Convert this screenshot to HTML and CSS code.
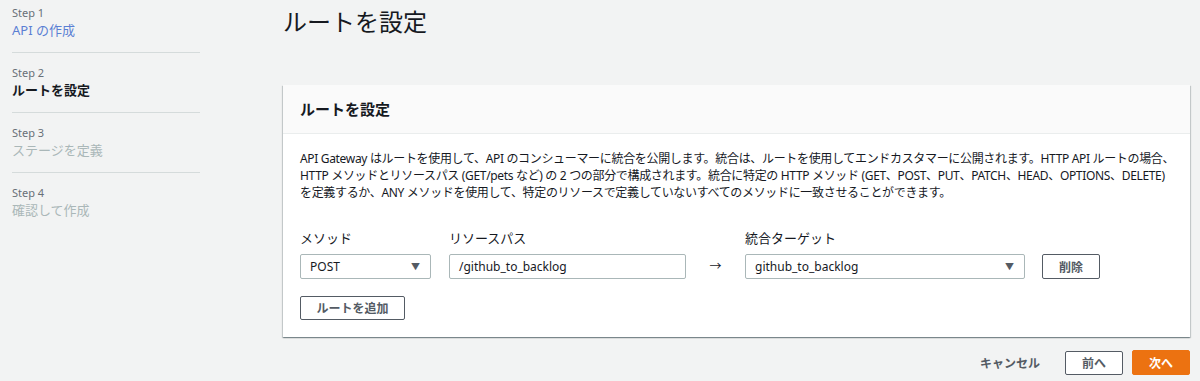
FILE: index.html
```html
<!DOCTYPE html>
<html lang="ja">
<head>
<meta charset="utf-8">
<link rel="stylesheet" href="styles.css">
</head>
<body>
<div class="page">
  <nav class="steps">
    <div class="step first">
      <div class="step-num">Step 1</div>
      <div class="step-title link">API の作成</div>
    </div>
    <div class="step">
      <div class="step-num">Step 2</div>
      <div class="step-title current">ルートを設定</div>
    </div>
    <div class="step">
      <div class="step-num">Step 3</div>
      <div class="step-title disabled">ステージを定義</div>
    </div>
    <div class="step last">
      <div class="step-num">Step 4</div>
      <div class="step-title disabled">確認して作成</div>
    </div>
  </nav>
  <main class="main">
    <h1 class="title">ルートを設定</h1>
    <section class="card">
      <header class="card-header">ルートを設定</header>
      <div class="card-body">
        <p class="desc">API Gateway はルートを使用して、API のコンシューマーに統合を公開します。統合は、ルートを使用してエンドカスタマーに公開されます。HTTP API ルートの場合、<br>HTTP メソッドとリソースパス (GET/pets など) の 2 つの部分で構成されます。統合に特定の HTTP メソッド (GET、POST、PUT、PATCH、HEAD、OPTIONS、DELETE)<br>を定義するか、ANY メソッドを使用して、特定のリソースで定義していないすべてのメソッドに一致させることができます。</p>
        <div class="route-row">
          <div class="field f-method">
            <label class="label">メソッド</label>
            <div class="select"><span>POST</span><span class="caret">▼</span></div>
          </div>
          <div class="field f-path">
            <label class="label">リソースパス</label>
            <div class="input">/github_to_backlog</div>
          </div>
          <div class="arrow">→</div>
          <div class="field f-target">
            <label class="label">統合ターゲット</label>
            <div class="select"><span>github_to_backlog</span><span class="caret">▼</span></div>
          </div>
          <button class="btn btn-del">削除</button>
        </div>
        <button class="btn btn-add">ルートを追加</button>
      </div>
    </section>
    <div class="footer">
      <span class="cancel">キャンセル</span>
      <button class="btn btn-prev">前へ</button>
      <button class="btn btn-next">次へ</button>
    </div>
  </main>
</div>
</body>
</html>
```
FILE: styles.css
```css
* { box-sizing: border-box; }
html, body {
  margin: 0;
  padding: 0;
  background: #f2f3f3;
  font-family: "Noto Sans", "Noto Sans CJK JP", sans-serif;
  color: #16191f;
}
.page {
  display: flex;
  width: 1200px;
  height: 381px;
  overflow: hidden;
}
.steps {
  width: 283px;
  flex: none;
  padding-left: 12px;
}
.step {
  width: 188px;
  padding: 12px 0 13px;
  border-bottom: 1px solid #d5dbdb;
}
.step.first { padding-top: 5px; }
.step.last { border-bottom: none; }
.step-num {
  font-size: 11px;
  line-height: 16px;
  color: #687078;
}
.step-title {
  font-size: 13px;
  line-height: 18px;
}
.step-title.link { color: #5b7fd3; }
.step-title.current { font-weight: 700; color: #16191f; }
.step-title.disabled { color: #aab7b8; }

.main {
  width: 907px;
  flex: none;
}
.title {
  margin: 7px 0 0;
  font-size: 24px;
  line-height: 30px;
  font-weight: 400;
  color: #16191f;
}
.card {
  margin-top: 48px;
  background: #fff;
  box-shadow: 0 1px 1px 0 rgba(0, 28, 36, 0.3), 1px 1px 1px 0 rgba(0, 28, 36, 0.15), -1px 1px 1px 0 rgba(0, 28, 36, 0.15);
}
.card-header {
  height: 49px;
  line-height: 48px;
  padding: 0 17px;
  background: #fafafa;
  border-bottom: 1px solid #eaeded;
  font-size: 15px;
  font-weight: 700;
}
.card-body {
  padding: 16px 17px 17px;
}
.desc {
  margin: 0;
  font-size: 12px;
  line-height: 17px;
  letter-spacing: -0.33px;
  white-space: nowrap;
}
.route-row {
  display: flex;
  align-items: flex-end;
  margin-top: 27px;
}
.field { display: flex; flex-direction: column; }
.label {
  font-size: 13px;
  line-height: 20px;
  margin-bottom: 6px;
}
.f-method { width: 131px; }
.f-path { width: 237px; margin-left: 18px; }
.f-target { width: 280px; }
.arrow {
  width: 59px;
  height: 25px;
  line-height: 25px;
  text-align: center;
  font-size: 12px;
  color: #16191f;
}
.select, .input {
  height: 25px;
  border: 1px solid #aab7b8;
  border-radius: 2px;
  background: #fff;
  padding: 0 9px;
  font-size: 12px;
  line-height: 23px;
  display: flex;
  justify-content: space-between;
  align-items: center;
}
.caret {
  font-size: 9px;
  color: #545b64;
  margin-right: 1px;
}
.btn {
  font-family: "Noto Sans", "Noto Sans CJK JP", sans-serif;
  background: #fff;
  border: 1px solid #545b64;
  border-radius: 2px;
  color: #545b64;
  font-weight: 700;
  font-size: 12px;
  padding: 0;
  cursor: pointer;
}
.btn-del {
  width: 58px;
  height: 25px;
  margin-left: 17px;
}
.btn-add {
  display: block;
  margin-top: 17px;
  width: 105px;
  height: 24px;
}
.footer {
  display: flex;
  justify-content: flex-end;
  align-items: center;
  margin-top: 13px;
}
.cancel {
  font-size: 12px;
  font-weight: 700;
  color: #545b64;
  margin-right: 25px;
}
.btn-prev {
  width: 58px;
  height: 24px;
}
.btn-next {
  width: 58px;
  height: 25px;
  margin-left: 9px;
  background: #ec7211;
  border-color: #ec7211;
  color: #fff;
}
```
